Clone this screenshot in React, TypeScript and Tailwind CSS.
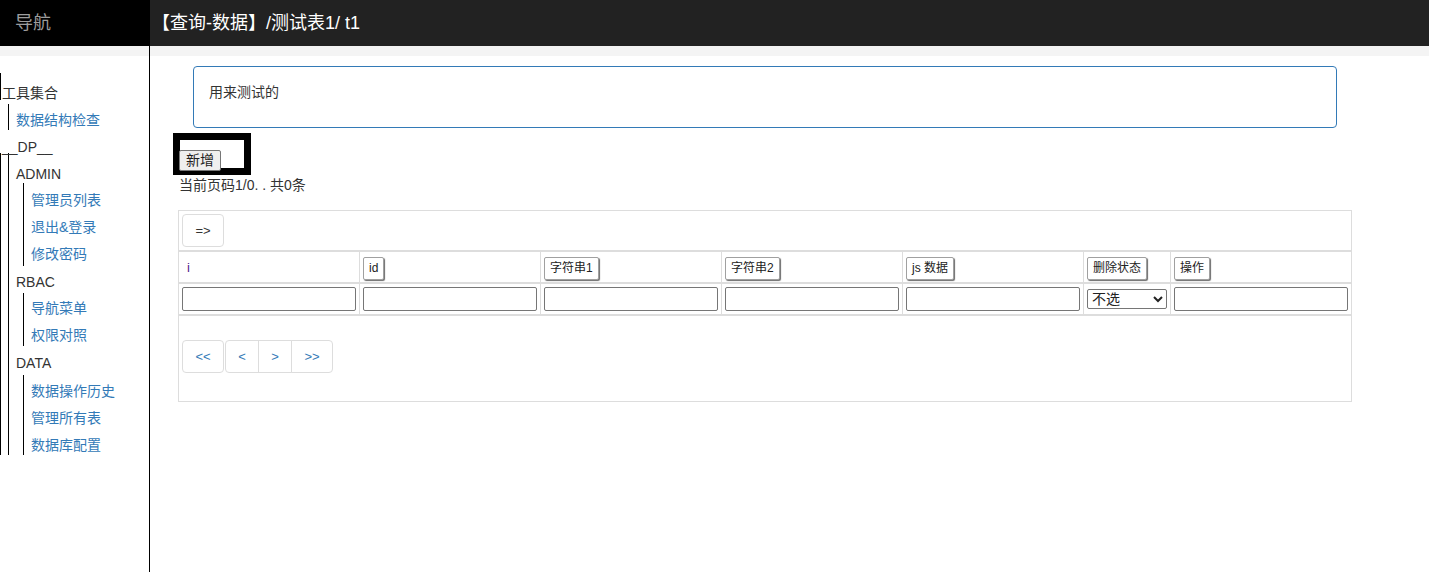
import React from "react";

const font = { fontFamily: '"Liberation Sans", "Noto Sans CJK SC", sans-serif' };

function Link({ children }: { children: React.ReactNode }) {
  return <div className="h-[27px] flex items-center text-[#337ab7] text-[14px] whitespace-nowrap">{children}</div>;
}

function HeadBtn({ children }: { children: React.ReactNode }) {
  return (
    <button className="h-[23px] px-[5px] text-[12px] text-[#222] bg-white border border-[#a0a0a0] rounded-[2px] shadow-[1px_1px_1px_#6b6b6b] leading-none">
      {children}
    </button>
  );
}

function PageBtn({ children, cls }: { children: React.ReactNode; cls: string }) {
  return (
    <div className={"h-[33px] flex items-center justify-center text-[13px] text-[#337ab7] border border-[#ddd] bg-white " + cls}>
      {children}
    </div>
  );
}

export default function App() {
  const inputCls = "h-[24px] w-[174px] border border-[#767676] rounded-[2px] bg-white";
  return (
    <div style={font} className="w-[1429px] h-[572px] overflow-hidden bg-white text-[#333] flex flex-col">
      {/* header */}
      <div className="h-[46px] flex shrink-0">
        <div className="w-[150px] bg-black flex items-center pl-[15px] text-[18px] text-[#9d9d9d]">导航</div>
        <div className="flex-1 bg-[#222] flex items-center pl-[2px] text-[18px] text-white">【查询-数据】/测试表1/ t1</div>
      </div>
      <div className="flex flex-1">
        {/* sidebar */}
        <div className="w-[150px] border-r border-black shrink-0 flex flex-col">
          <div className="h-[10px] bg-[#f4f4f4]" />
          <div className="pt-[17px] text-[14px]">
            <div className="border-l border-black h-[27px]">
              <div className="pl-[1px] pt-[10px] leading-[20px] whitespace-nowrap">工具集合</div>
            </div>
            <div className="ml-[8px] mt-[4px] border-l border-black pl-[7px] h-[26px] pt-[3px] overflow-visible">
              <Link>数据结构检查</Link>
            </div>
            <div className="h-[23px] pl-[2px] pt-[7px] leading-[20px]">__DP__</div>
            <div className="border-l border-black">
              <div className="ml-[7px] border-l border-black pl-[7px]">
                <div className="h-[30px] pt-[11px] leading-[20px]">ADMIN</div>
                <div className="ml-[7px] border-l border-black pl-[7px] pt-[4px] h-[83px]">
                  <Link>管理员列表</Link>
                  <Link>退出&amp;登录</Link>
                  <Link>修改密码</Link>
                </div>
                <div className="h-[27px] pt-[6px] leading-[20px]">RBAC</div>
                <div className="ml-[7px] border-l border-black pl-[7px] pt-[2px] h-[53px]">
                  <Link>导航菜单</Link>
                  <Link>权限对照</Link>
                </div>
                <div className="h-[29px] pt-[7px] leading-[20px]">DATA</div>
                <div className="ml-[7px] border-l border-black pl-[7px] pt-[3px] h-[80px]">
                  <Link>数据操作历史</Link>
                  <Link>管理所有表</Link>
                  <Link>数据库配置</Link>
                </div>
              </div>
            </div>
          </div>
        </div>
        {/* main */}
        <div className="flex-1 flex flex-col">
          <div className="h-[10px] bg-[#f4f4f4]" />
          <div className="ml-[43px] mt-[10px] w-[1144px] border border-[#337ab7] rounded-[4px] pt-[15px] pb-[25px] pl-[15px] text-[14px] leading-[20px]">
            用来测试的
          </div>
          <div className="ml-[23px] mt-[5px] w-[78px] h-[42px] border-[7px] border-black pt-[8px]">
            <button className="h-[21px] px-[6px] text-[14px] leading-none text-[#222] bg-[#efefef] border border-[#767676] rounded-[2px] ml-[-1px]">新增</button>
          </div>
          <div className="ml-[29px] mt-[1px] text-[14px] leading-[18px]">当前页码1/0. . 共0条</div>
          <div className="ml-[28px] mt-[16px] w-[1174px] border border-[#ddd]">
            <div className="h-[41px] pt-[3px] pl-[3px] border-b-2 border-[#ddd]">
              <button className="h-[33px] w-[42px] border border-[#ddd] rounded-[4px] text-[13px] text-[#333] bg-white">=&gt;</button>
            </div>
            <div className="flex h-[32px] border-b-2 border-[#ddd]">
              <div className="w-[181px] border-r border-[#ddd] pl-[8px] pt-[6px] text-[13px] text-[#551a8b]">i</div>
              <div className="w-[181px] border-r border-[#ddd] pl-[3px] pt-[3px]"><HeadBtn>id</HeadBtn></div>
              <div className="w-[181px] border-r border-[#ddd] pl-[3px] pt-[3px]"><HeadBtn>字符串1</HeadBtn></div>
              <div className="w-[181px] border-r border-[#ddd] pl-[3px] pt-[3px]"><HeadBtn>字符串2</HeadBtn></div>
              <div className="w-[181px] border-r border-[#ddd] pl-[3px] pt-[3px]"><HeadBtn>js 数据</HeadBtn></div>
              <div className="w-[87px] border-r border-[#ddd] pl-[3px] pt-[3px]"><HeadBtn>删除状态</HeadBtn></div>
              <div className="flex-1 pl-[3px] pt-[3px]"><HeadBtn>操作</HeadBtn></div>
            </div>
            <div className="flex h-[32px] border-b-2 border-[#ddd]">
              <div className="w-[181px] border-r border-[#ddd] pl-[3px] pt-[3px]"><input className={inputCls} /></div>
              <div className="w-[181px] border-r border-[#ddd] pl-[3px] pt-[3px]"><input className={inputCls} /></div>
              <div className="w-[181px] border-r border-[#ddd] pl-[3px] pt-[3px]"><input className={inputCls} /></div>
              <div className="w-[181px] border-r border-[#ddd] pl-[3px] pt-[3px]"><input className={inputCls} /></div>
              <div className="w-[181px] border-r border-[#ddd] pl-[3px] pt-[3px]"><input className={inputCls} /></div>
              <div className="w-[87px] border-r border-[#ddd] pl-[3px] pt-[3px]">
                <select className="h-[20px] w-[80px] border border-[#767676] rounded-[2px] bg-white text-[14px] text-[#222] leading-none">
                  <option>不选</option>
                </select>
              </div>
              <div className="flex-1 pl-[3px] pt-[3px]"><input className={inputCls} /></div>
            </div>
            <div className="h-[85px] pt-[24px] pl-[3px] flex items-start">
              <PageBtn cls="w-[42px] rounded-[4px]">&lt;&lt;</PageBtn>
              <PageBtn cls="w-[34px] rounded-l-[4px] ml-[1px]">&lt;</PageBtn>
              <PageBtn cls="w-[34px] -ml-px">&gt;</PageBtn>
              <PageBtn cls="w-[42px] rounded-r-[4px] -ml-px">&gt;&gt;</PageBtn>
            </div>
          </div>
        </div>
      </div>
    </div>
  );
}
